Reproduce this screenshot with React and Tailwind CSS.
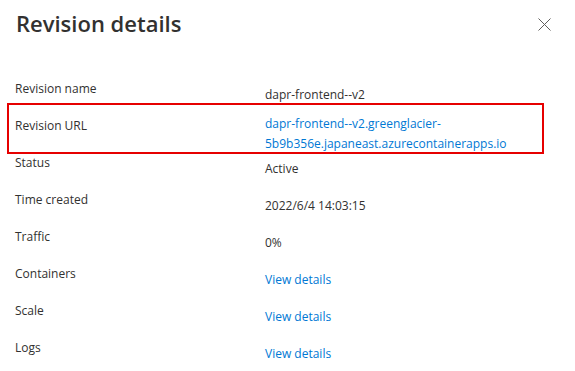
const rows = [
  { label: 'Revision name', value: 'dapr-frontend--v2' },
  { label: 'Revision URL', value: 'dapr-frontend--v2.greenglacier-5b9b356e.japaneast.azurecontainerapps.io', link: true, url: true },
  { label: 'Status', value: 'Active' },
  { label: 'Time created', value: '2022/6/4 14:03:15' },
  { label: 'Traffic', value: '0%' },
  { label: 'Containers', value: 'View details', link: true },
  { label: 'Scale', value: 'View details', link: true },
  { label: 'Logs', value: 'View details', link: true },
]

function DetailRow({ label, value, link, url }) {
  return (
    <div className="flex h-[37px] items-start">
      <div className="w-[250px] shrink-0 leading-5 text-[#323130]">{label}</div>
      <div
        className={`w-[250px] leading-5 ${url ? '-mt-[2px]' : 'mt-[6px]'} ${link ? 'text-[#0078d4]' : 'text-[#323130]'}`}
      >
        {url ? (
          <>
            dapr-frontend--v2.greenglacier-
            <br />
            5b9b356e.japaneast.azurecontainerapps.io
          </>
        ) : (
          value
        )}
      </div>
    </div>
  )
}

export default function App() {
  return (
    <div className="relative h-[371px] w-[575px] overflow-hidden bg-white font-['Segoe_UI','Open_Sans',sans-serif] text-[12px]">
      <div className="flex items-start justify-between pl-4 pr-6 pt-[7px]">
        <h1 className="text-[22px] font-semibold leading-8 text-[#323130]">Revision details</h1>
        <button className="mt-[11px] text-[#605e5c]">
          <svg width="13" height="13" viewBox="0 0 13 13" fill="none">
            <path d="M0.5 0.5 L12.5 12.5 M12.5 0.5 L0.5 12.5" stroke="currentColor" strokeWidth="1" />
          </svg>
        </button>
      </div>

      <div className="flex flex-col px-[15px] pt-[40px]">
        {rows.map((r) => (
          <DetailRow key={r.label} {...r} />
        ))}
      </div>

      {/* highlight annotation */}
      <div className="pointer-events-none absolute left-[7px] top-[103px] h-[51px] w-[537px] border-2 border-[#e60000]" />
    </div>
  )
}
